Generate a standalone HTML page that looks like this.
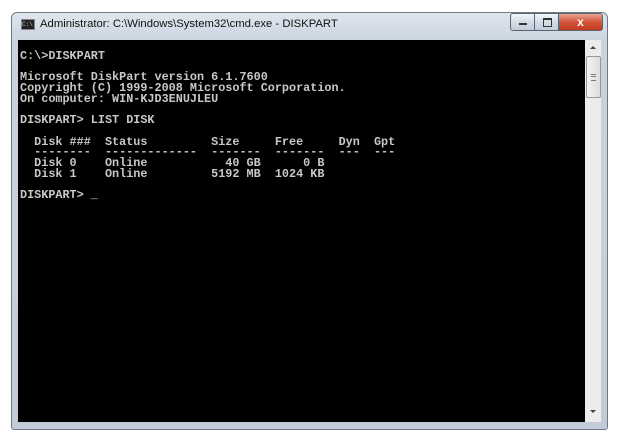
<!DOCTYPE html>
<html><head><style>
body{margin:0;width:625px;height:446px;background:#fff;position:relative;overflow:hidden;font-family:"Liberation Sans",sans-serif}
.win{position:absolute;left:11px;top:12px;width:597px;height:418px;border-radius:6px 6px 3px 3px;background:linear-gradient(#dfe6ee,#c9d3de 30px,#c3ccd6);border:1px solid #6f7a86;box-sizing:border-box}
.title{position:absolute;left:40px;top:18px;font-size:11.3px;color:#111}
.ico{position:absolute;left:21px;top:19px;width:14px;height:11px;background:#222;border:1px solid #888;box-sizing:border-box;color:#ccc;font-size:6px;line-height:9px;font-family:"Liberation Mono",monospace}
.btn{position:absolute;top:13px;height:18px;border:1px solid #5a6674;box-sizing:border-box;background:linear-gradient(#f2f5f9,#d4dce6 50%,#c2ccd8)}
.con{position:absolute;left:18px;top:40px;width:567px;height:382px;background:#000}
.sb{position:absolute;left:585px;top:40px;width:16px;height:382px;background:#ececec}
pre{margin:0;position:absolute;left:20px;top:51px;font-family:"Liberation Mono",monospace;font-size:11.8px;line-height:10.7px;color:#c8c8c8;font-weight:bold;letter-spacing:0}
</style></head><body>
<div class="win"></div>
<div class="ico">C:\</div>
<div class="title">Administrator: C:\Windows\System32\cmd.exe - DISKPART</div>
<div class="btn" style="left:510px;width:25px;border-radius:3px 0 0 3px"><div style="position:absolute;left:8px;top:9px;width:8px;height:2px;background:#333"></div></div>
<div class="btn" style="left:534px;width:25px"><div style="position:absolute;left:8px;top:4px;width:7px;height:6px;border:1px solid #333;border-top-width:2px"></div></div>
<div class="btn" style="left:558px;width:45px;border-radius:0 3px 3px 0;background:linear-gradient(#e8a592,#d2543a 50%,#c23a1f)"><div style="position:absolute;left:0;right:0;top:0;text-align:center;color:#fff;font-weight:bold;font-size:12px;line-height:16px">x</div></div>
<div class="con"></div>
<div class="sb">
<div style="position:absolute;left:5px;top:6px;width:0;height:0;border-left:3px solid transparent;border-right:3px solid transparent;border-bottom:3px solid #444"></div>
<div style="position:absolute;left:1px;top:16px;width:13px;height:40px;border:1px solid #999;border-radius:2px;background:linear-gradient(90deg,#f4f4f4,#dcdcdc)"><div style="position:absolute;left:4px;top:17px;width:5px;height:5px;border-top:1px solid #777;border-bottom:1px solid #777"></div><div style="position:absolute;left:4px;top:19px;width:5px;height:1px;background:#777"></div></div>
<div style="position:absolute;left:5px;top:370px;width:0;height:0;border-left:3px solid transparent;border-right:3px solid transparent;border-top:3px solid #444"></div>
</div>
<pre>C:\&gt;DISKPART

Microsoft DiskPart version 6.1.7600
Copyright (C) 1999-2008 Microsoft Corporation.
On computer: WIN-KJD3ENUJLEU

DISKPART&gt; LIST DISK

  Disk ###  Status         Size     Free     Dyn  Gpt
  --------  -------------  -------  -------  ---  ---
  Disk 0    Online           40 GB      0 B
  Disk 1    Online         5192 MB  1024 KB

DISKPART&gt; _</pre>
</body></html>
